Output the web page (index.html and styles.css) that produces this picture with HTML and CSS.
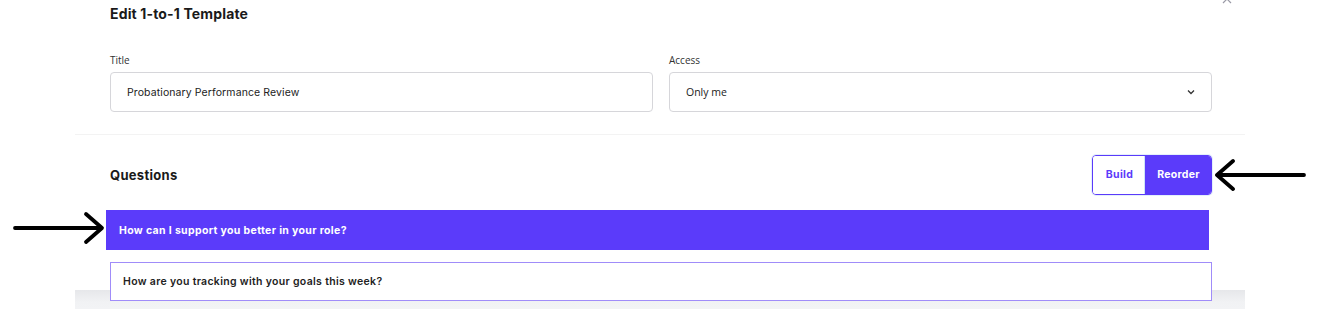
FILE: index.html
```html
<!DOCTYPE html>
<html>
<head>
<meta charset="utf-8">
<link rel="stylesheet" href="styles.css">
</head>
<body>
<div class="page">
  <div class="panel">
    <svg class="close" width="10" height="10" viewBox="0 0 10 10"><path d="M1 1 L9 9 M9 1 L1 9" stroke="#9a9aa6" stroke-width="1.2"/></svg>
    <section class="top">
      <h1 class="heading">Edit 1-to-1 Template</h1>
      <div class="fields">
        <div class="field">
          <label class="label">Title</label>
          <div class="input">Probationary Performance Review</div>
        </div>
        <div class="field">
          <label class="label">Access</label>
          <div class="input select">
            <span>Only me</span>
            <svg class="chev" width="8" height="6" viewBox="0 0 8 6"><path d="M1 1.5 L4 4.5 L7 1.5" fill="none" stroke="#333" stroke-width="1.3"/></svg>
          </div>
        </div>
      </div>
    </section>
    <section class="questions">
      <div class="q-head">
        <h2 class="q-title">Questions</h2>
        <div class="toggle">
          <button class="tbtn build">Build</button>
          <button class="tbtn reorder">Reorder</button>
        </div>
      </div>
      <div class="q-list">
        <div class="q-item dragging">How can I support you better in your role?</div>
        <div class="q-item">How are you tracking with your goals this week?</div>
      </div>
      <div class="q-foot"></div>
    </section>
  </div>
  <svg class="arrow arrow-right" width="96" height="36" viewBox="0 0 96 36"><path d="M2 18 H88 M73 4 L89 18 L73 32" fill="none" stroke="#000" stroke-width="3.8" stroke-linecap="round" stroke-linejoin="round"/></svg>
  <svg class="arrow arrow-left" width="96" height="36" viewBox="0 0 96 36"><path d="M93 18 H7 M22 4 L6 18 L22 32" fill="none" stroke="#000" stroke-width="3.8" stroke-linecap="round" stroke-linejoin="round"/></svg>
</div>
</body>
</html>
```

FILE: styles.css
```css
* { box-sizing: border-box; }
html, body { margin: 0; padding: 0; background: #fff; }
body { font-family: "Inter", "Liberation Sans", sans-serif; color: #1a1a1a; }
.page { position: relative; width: 1329px; height: 309px; overflow: hidden; }
.panel { position: relative; margin-left: 75px; width: 1170px; }
.close { position: absolute; left: 1147px; top: -6px; }
.top { padding: 5px 33px 22px 35px; border-bottom: 1px solid #f3f3f3; }
.heading { margin: 0; font-size: 14px; font-weight: 700; line-height: 18px; letter-spacing: 0.15px; }
.fields { display: flex; gap: 16px; margin-top: 30px; }
.field { flex: 1; display: flex; flex-direction: column; }
.label { font-size: 10px; line-height: 14px; color: #333; margin-bottom: 5px; font-family: "Open Sans", sans-serif; }
.input { height: 40px; border: 1.5px solid #d6d6da; border-radius: 4px; padding: 0 16px; display: flex; align-items: center; font-size: 10.5px; color: #222; letter-spacing: 0.1px; }
.select { justify-content: space-between; font-family: "Open Sans", sans-serif; padding-right: 16px; letter-spacing: 0; }
.chev { display: block; }
.questions { padding: 19px 33px 0 35px; position: relative; }
.q-head { display: flex; justify-content: space-between; align-items: center; height: 41px; }
.q-title { margin: 0; font-size: 13px; font-weight: 700; letter-spacing: 0.3px; }
.toggle { display: flex; height: 40px; border: 1.5px solid #5b3bfa; border-radius: 4px; overflow: hidden; box-shadow: 0 0 0 1px #e4f0fb; }
.tbtn { border: 0; margin: 0; font-family: inherit; font-size: 10.5px; font-weight: 700; cursor: pointer; letter-spacing: 0.3px; }
.build { width: 51px; background: #fff; color: #5b3bfa; padding: 0 0 0 2px; }
.reorder { width: 67px; background: #5b3bfa; color: #fff; box-shadow: inset 1px 0 0 #cfe3f7; padding: 0 0 0 2px; }
.q-list { display: flex; flex-direction: column; gap: 12px; margin-top: 15px; position: relative; z-index: 1; }
.q-item { height: 39px; border: 1.5px solid #a08cf9; background: #fff; display: flex; align-items: center; padding: 0 12px; font-size: 10.5px; font-weight: 600; color: #222; letter-spacing: 0.32px; }
.q-item.dragging { background: #5b3bfa; border: 0; color: #fff; height: 40px; margin-left: -4px; margin-right: 3px; padding: 0 13px; font-weight: 700; letter-spacing: 0.35px; }
.q-foot { position: absolute; left: 0; right: 0; top: 155px; height: 30px; background: linear-gradient(#e6e7ea, #f1f2f4 40%, #f4f5f7); }
.arrow { position: absolute; }
.arrow-right { left: 13px; top: 210px; }
.arrow-left { left: 1211px; top: 157px; }
```
